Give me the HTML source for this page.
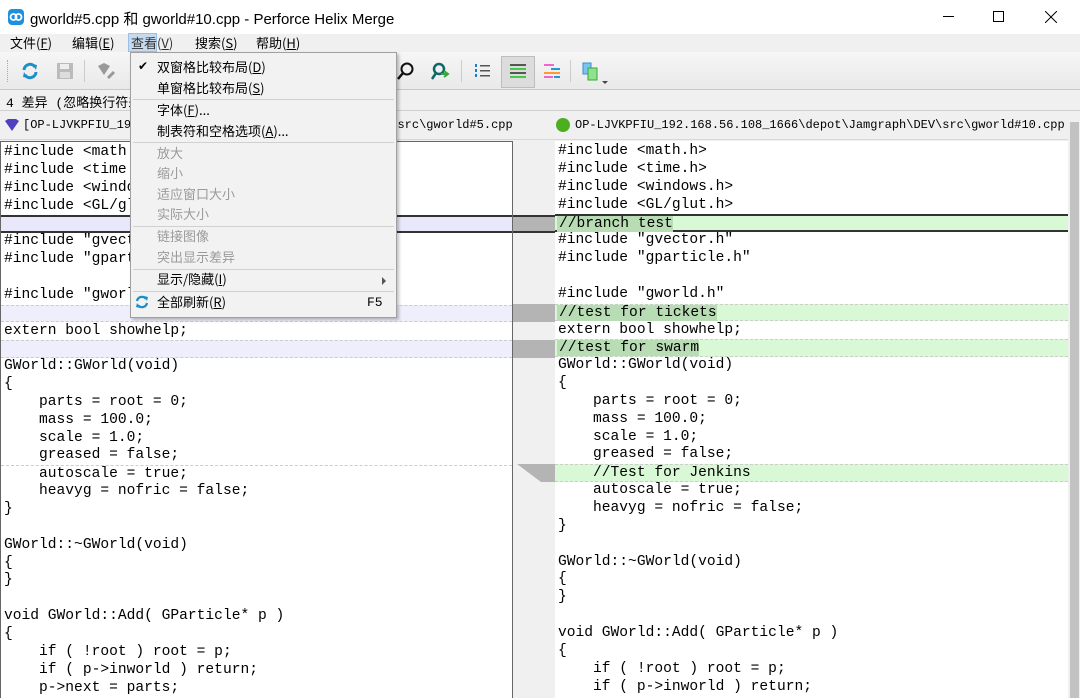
<!DOCTYPE html>
<html><head><meta charset="utf-8"><style>
*{margin:0;padding:0;box-sizing:border-box}
body{width:1080px;height:698px;overflow:hidden;background:#f0f0f0;position:relative;font-family:"Liberation Sans","Noto Sans CJK SC",sans-serif;}
.abs{position:absolute}
.code{font-family:"Liberation Mono","Noto Sans CJK SC",monospace;font-size:14.6px;line-height:17.85px;white-space:pre;color:#000}
.row{position:absolute;left:0;right:0;height:17.85px;padding-left:3px}
.mi{position:absolute;left:26px;font-size:13px;color:#000;white-space:pre;font-family:"Noto Sans CJK SC",sans-serif;line-height:18px}
.mb{position:absolute;top:33px;font-size:13px;white-space:pre;font-family:"Noto Sans CJK SC",sans-serif;line-height:19px}
.dis{color:#9a9a9a}
.sep{position:absolute;left:2px;right:2px;height:1px;background:#d0d0d0}
</style></head><body>
<!-- title bar -->
<div class="abs" style="left:0;top:0;width:1080px;height:34px;background:#fff"></div>
<svg class="abs" style="left:8px;top:9px" width="16" height="16"><rect x="0" y="0" width="16" height="16" rx="4" fill="#1e90e0"/><circle cx="5.5" cy="8" r="3" fill="none" stroke="#fff" stroke-width="1.8"/><circle cx="10.5" cy="8" r="3" fill="none" stroke="#fff" stroke-width="1.8"/></svg>
<div class="abs" style="left:30px;top:8px;font-size:15px;color:#000">gworld#5.cpp 和 gworld#10.cpp - Perforce Helix Merge</div>
<div class="abs" style="left:943px;top:16px;width:11px;height:1px;background:#000"></div>
<div class="abs" style="left:993px;top:11px;width:11px;height:11px;border:1px solid #000"></div>
<svg class="abs" style="left:1045px;top:11px" width="12" height="12"><path d="M0 0L12 12M12 0L0 12" stroke="#000" stroke-width="1"/></svg>
<!-- menubar -->
<div class="abs" style="left:0;top:34px;width:1080px;height:18px;background:#f0f0f0"></div>
<div class="abs" style="left:128px;top:33px;width:29px;height:19px;background:#c6daee;border:1px solid #99c0e6"></div>
<div class="mb" style="left:10px">文件(<u>F</u>)</div>
<div class="mb" style="left:72px">编辑(<u>E</u>)</div>
<div class="mb" style="left:131px;color:#333">查看(<u>V</u>)</div>
<div class="mb" style="left:195px">搜索(<u>S</u>)</div>
<div class="mb" style="left:256px">帮助(<u>H</u>)</div>
<!-- toolbar -->
<div class="abs" style="left:0;top:52px;width:1080px;height:38px;background:linear-gradient(#f6f6f6,#e9e9e9);border-bottom:1px solid #c8c8c8"></div>
<div class="abs" style="left:7px;top:60px;width:2px;height:22px;border-left:1px dotted #aaa"></div>
<svg class="abs" style="left:21px;top:62px" width="18" height="18"><path d="M3 8a6 6 0 0 1 11-3" stroke="#1a8fc9" stroke-width="3" fill="none"/><path d="M15 10a6 6 0 0 1-11 3" stroke="#1a8fc9" stroke-width="3" fill="none"/><path d="M11 2l5 1-1 5z M7 16l-5-1 1-5z" fill="#1a8fc9"/></svg>
<svg class="abs" style="left:56px;top:62px" width="18" height="18"><rect x="1" y="1" width="16" height="16" fill="#bbb"/><rect x="4" y="2" width="9" height="5" fill="#eee"/><rect x="4" y="10" width="10" height="6" fill="#ddd"/></svg>
<div class="abs" style="left:84px;top:60px;width:1px;height:22px;background:#ccc"></div>
<svg class="abs" style="left:96px;top:62px" width="20" height="18"><path d="M2 4l6-3 6 3-6 9z" fill="#999"/><path d="M12 16l6-6" stroke="#999" stroke-width="3"/></svg>
<svg class="abs" style="left:396px;top:61px" width="20" height="20"><circle cx="11" cy="8" r="5.5" fill="none" stroke="#111" stroke-width="2"/><path d="M7 12l-5 6" stroke="#111" stroke-width="2.5"/></svg>
<svg class="abs" style="left:430px;top:61px" width="20" height="20"><circle cx="9" cy="8" r="5" fill="none" stroke="#166" stroke-width="2.5"/><path d="M6 12l-4 6" stroke="#166" stroke-width="2.5"/><path d="M11 13h6M14 10l4 3-4 3" stroke="#3a3" stroke-width="2" fill="none"/></svg>
<div class="abs" style="left:461px;top:60px;width:1px;height:22px;background:#ccc"></div>
<svg class="abs" style="left:474px;top:63px" width="18" height="16"><g fill="#1a7fc9"><rect x="1" y="1" width="2" height="3"/><rect x="1" y="6" width="2" height="3"/><rect x="1" y="11" width="2" height="3"/></g><g fill="#555"><rect x="6" y="2" width="10" height="1.5"/><rect x="6" y="7" width="10" height="1.5"/><rect x="6" y="12" width="10" height="1.5"/></g></svg>
<div class="abs" style="left:501px;top:56px;width:34px;height:32px;background:#dcdcdc;border:1px solid #bdbdbd"></div>
<svg class="abs" style="left:509px;top:63px" width="18" height="17"><g fill="#555"><rect x="1" y="1" width="16" height="2"/><rect x="1" y="9" width="16" height="2"/></g><g fill="#4c4"><rect x="1" y="5" width="16" height="2"/><rect x="1" y="13" width="16" height="2"/></g></svg>
<svg class="abs" style="left:543px;top:63px" width="18" height="17"><rect x="1" y="1" width="10" height="2" fill="#e6c"/><rect x="8" y="5" width="9" height="2" fill="#29d"/><rect x="1" y="9" width="16" height="2" fill="#f93"/><rect x="1" y="13" width="9" height="2" fill="#e6c"/><rect x="11" y="13" width="6" height="2" fill="#29d"/></svg>
<div class="abs" style="left:570px;top:60px;width:1px;height:22px;background:#ccc"></div>
<svg class="abs" style="left:582px;top:62px" width="28" height="24"><rect x="1" y="1" width="8" height="11" fill="#7bc4ef" stroke="#3a8fc9"/><rect x="6" y="6" width="9" height="12" fill="#8fe08f" stroke="#3a3"/><path d="M20 19h6l-3 3z" fill="#444"/></svg>
<!-- status -->
<div class="abs" style="left:6px;top:92px;font-size:13px;white-space:pre;font-family:'Liberation Mono','Noto Sans CJK SC',monospace">4 差异 (忽略换行符差异</div>
<div class="abs" style="left:0;top:110px;width:1080px;height:1px;background:#d0d0d0"></div>
<!-- header -->
<svg class="abs" style="left:4px;top:118px" width="16" height="14"><path d="M1 3l3-2h8l3 2-7 10z" fill="#5040c0"/></svg>
<div class="abs" style="left:23px;top:118px;font-size:12px;font-family:'Liberation Mono',monospace;white-space:pre">[OP-LJVKPFIU_192.168.56.108_1666\depot\Jamgraph\DEV\src\gworld#5.cpp</div>
<div class="abs" style="left:556px;top:118px;width:14px;height:14px;border-radius:50%;background:#4caf20"></div>
<div class="abs" style="left:575px;top:118px;font-size:12px;font-family:'Liberation Mono',monospace;white-space:pre">OP-LJVKPFIU_192.168.56.108_1666\depot\Jamgraph\DEV\src\gworld#10.cpp</div>
<div class="abs" style="left:0;top:139px;width:1068px;height:1px;background:#d8d8d8"></div>
<!-- left pane -->
<div class="abs code" style="left:0;top:141px;width:513px;height:557px;background:#fff;border:1px solid #666;border-bottom:none;overflow:hidden">
<div class="abs" style="left:0;top:2px;width:511px">
<div class="row" style="top:0">#include &lt;math.h&gt;</div>
<div class="row" style="top:17.85px">#include &lt;time.h&gt;</div>
<div class="row" style="top:35.7px">#include &lt;windows.h&gt;</div>
<div class="row" style="top:53.55px">#include &lt;GL/glut.h&gt;</div>
<div class="row" style="top:71.4px;background:#e8e8fa;border-top:2px solid #333;border-bottom:2px solid #333"></div>
<div class="row" style="top:89.25px">#include "gvector.h"</div>
<div class="row" style="top:107.1px">#include "gparticle.h"</div>
<div class="row" style="top:142.8px">#include "gworld.h"</div>
<div class="row" style="top:160.65px;background:#eeeefc;border-top:1px dashed #ccc;border-bottom:1px dashed #ccc"></div>
<div class="row" style="top:178.5px">extern bool showhelp;</div>
<div class="row" style="top:196.35px;background:#eeeefc;border-top:1px dashed #ccc;border-bottom:1px dashed #ccc"></div>
<div class="row" style="top:214.2px">GWorld::GWorld(void)</div>
<div class="row" style="top:232.05px">{</div>
<div class="row" style="top:249.9px">    parts = root = 0;</div>
<div class="row" style="top:267.75px">    mass = 100.0;</div>
<div class="row" style="top:285.6px">    scale = 1.0;</div>
<div class="row" style="top:303.45px">    greased = false;</div>
<div class="row" style="top:321.3px;border-top:1px dashed #ccc">    autoscale = true;</div>
<div class="row" style="top:339.15px">    heavyg = nofric = false;</div>
<div class="row" style="top:357px">}</div>
<div class="row" style="top:392.7px">GWorld::~GWorld(void)</div>
<div class="row" style="top:410.55px">{</div>
<div class="row" style="top:428.4px">}</div>
<div class="row" style="top:464.1px">void GWorld::Add( GParticle* p )</div>
<div class="row" style="top:481.95px">{</div>
<div class="row" style="top:499.8px">    if ( !root ) root = p;</div>
<div class="row" style="top:517.65px">    if ( p-&gt;inworld ) return;</div>
<div class="row" style="top:535.5px">    p-&gt;next = parts;</div>
</div></div>
<!-- gutter -->
<div class="abs" style="left:513px;top:140px;width:42px;height:558px;background:#f0f0f0"></div>
<div class="abs" style="left:513px;top:215px;width:42px;height:18px;background:#b4b4b4;border-top:2px solid #333;border-bottom:2px solid #333"></div>
<div class="abs" style="left:513px;top:304px;width:42px;height:18px;background:#b4b4b4"></div>
<div class="abs" style="left:513px;top:340px;width:42px;height:18px;background:#b4b4b4"></div>
<svg class="abs" style="left:513px;top:464px" width="42" height="19"><path d="M4 0H42V18H28Z" fill="#b4b4b4"/></svg>
<!-- right pane -->
<div class="abs code" style="left:555px;top:141px;width:513px;height:557px;background:#fff;overflow:hidden">
<div class="abs" style="left:0;top:2px;width:513px">
<div class="row" style="top:0">#include &lt;math.h&gt;</div>
<div class="row" style="top:17.85px">#include &lt;time.h&gt;</div>
<div class="row" style="top:35.7px">#include &lt;windows.h&gt;</div>
<div class="row" style="top:53.55px">#include &lt;GL/glut.h&gt;</div>
<div class="row" style="top:71.4px;background:#d9f8d6;border-top:2px solid #333;border-bottom:2px solid #333;padding-left:2px"><span style="background:#b8dcb3;padding-left:2px">//branch test</span></div>
<div class="row" style="top:89.25px">#include "gvector.h"</div>
<div class="row" style="top:107.1px">#include "gparticle.h"</div>
<div class="row" style="top:142.8px">#include "gworld.h"</div>
<div class="row" style="top:160.65px;background:#d9f8d6;border-top:1px dashed #ccc;border-bottom:1px dashed #ccc;padding-left:2px"><span style="background:#b8dcb3;padding-left:2px">//test for tickets</span></div>
<div class="row" style="top:178.5px">extern bool showhelp;</div>
<div class="row" style="top:196.35px;background:#d9f8d6;border-top:1px dashed #ccc;border-bottom:1px dashed #ccc;padding-left:2px"><span style="background:#b8dcb3;padding-left:2px">//test for swarm</span></div>
<div class="row" style="top:214.2px">GWorld::GWorld(void)</div>
<div class="row" style="top:232.05px">{</div>
<div class="row" style="top:249.9px">    parts = root = 0;</div>
<div class="row" style="top:267.75px">    mass = 100.0;</div>
<div class="row" style="top:285.6px">    scale = 1.0;</div>
<div class="row" style="top:303.45px">    greased = false;</div>
<div class="row" style="top:321.3px;background:#d9f8d6;border-top:1px dashed #ccc;border-bottom:1px dashed #ccc">    //Test for Jenkins</div>
<div class="row" style="top:339.15px">    autoscale = true;</div>
<div class="row" style="top:357px">    heavyg = nofric = false;</div>
<div class="row" style="top:374.85px">}</div>
<div class="row" style="top:410.55px">GWorld::~GWorld(void)</div>
<div class="row" style="top:428.4px">{</div>
<div class="row" style="top:446.25px">}</div>
<div class="row" style="top:481.95px">void GWorld::Add( GParticle* p )</div>
<div class="row" style="top:499.8px">{</div>
<div class="row" style="top:517.65px">    if ( !root ) root = p;</div>
<div class="row" style="top:535.5px">    if ( p-&gt;inworld ) return;</div>
</div></div>
<!-- scrollbar -->
<div class="abs" style="left:1068px;top:112px;width:12px;height:586px;background:#f0f0f0"></div>
<div class="abs" style="left:1070px;top:122px;width:9px;height:576px;background:#c2c2c2"></div>
<!-- dropdown menu -->
<div class="abs" style="left:130px;top:52px;width:267px;height:266px;background:#f2f2f2;border:1px solid #a0a0a0;box-shadow:2px 2px 3px rgba(0,0,0,.25)">
<div class="abs" style="left:7px;top:6px;font-size:12px">✔</div>
<div class="mi" style="top:5px">双窗格比较布局(<u>D</u>)</div>
<div class="mi" style="top:26px">单窗格比较布局(<u>S</u>)</div>
<div class="sep" style="top:46px"></div>
<div class="mi" style="top:48px">字体(<u>F</u>)...</div>
<div class="mi" style="top:69px">制表符和空格选项(<u>A</u>)...</div>
<div class="sep" style="top:89px"></div>
<div class="mi dis" style="top:91px">放大</div>
<div class="mi dis" style="top:111px">缩小</div>
<div class="mi dis" style="top:132px">适应窗口大小</div>
<div class="mi dis" style="top:152px">实际大小</div>
<div class="sep" style="top:173px"></div>
<div class="mi dis" style="top:174px">链接图像</div>
<div class="mi dis" style="top:195px">突出显示差异</div>
<div class="sep" style="top:216px"></div>
<div class="mi" style="top:217px">显示/隐藏(<u>I</u>)</div>
<div class="abs" style="left:251px;top:224px;width:0;height:0;border-left:4px solid #555;border-top:4px solid transparent;border-bottom:4px solid transparent"></div>
<div class="sep" style="top:238px"></div>
<svg class="abs" style="left:4px;top:242px" width="14" height="14"><path d="M2 6a5 5 0 0 1 9-2" stroke="#1a8fc9" stroke-width="2.2" fill="none"/><path d="M12 8a5 5 0 0 1-9 2" stroke="#1a8fc9" stroke-width="2.2" fill="none"/><path d="M9 1l4 1-1 4zM5 13l-4-1 1-4z" fill="#1a8fc9"/></svg>
<div class="mi" style="top:240px">全部刷新(<u>R</u>)</div>
<div class="abs" style="left:236px;top:242px;font-size:13px;font-family:'Liberation Mono',monospace">F5</div>
</div>
</body></html>
